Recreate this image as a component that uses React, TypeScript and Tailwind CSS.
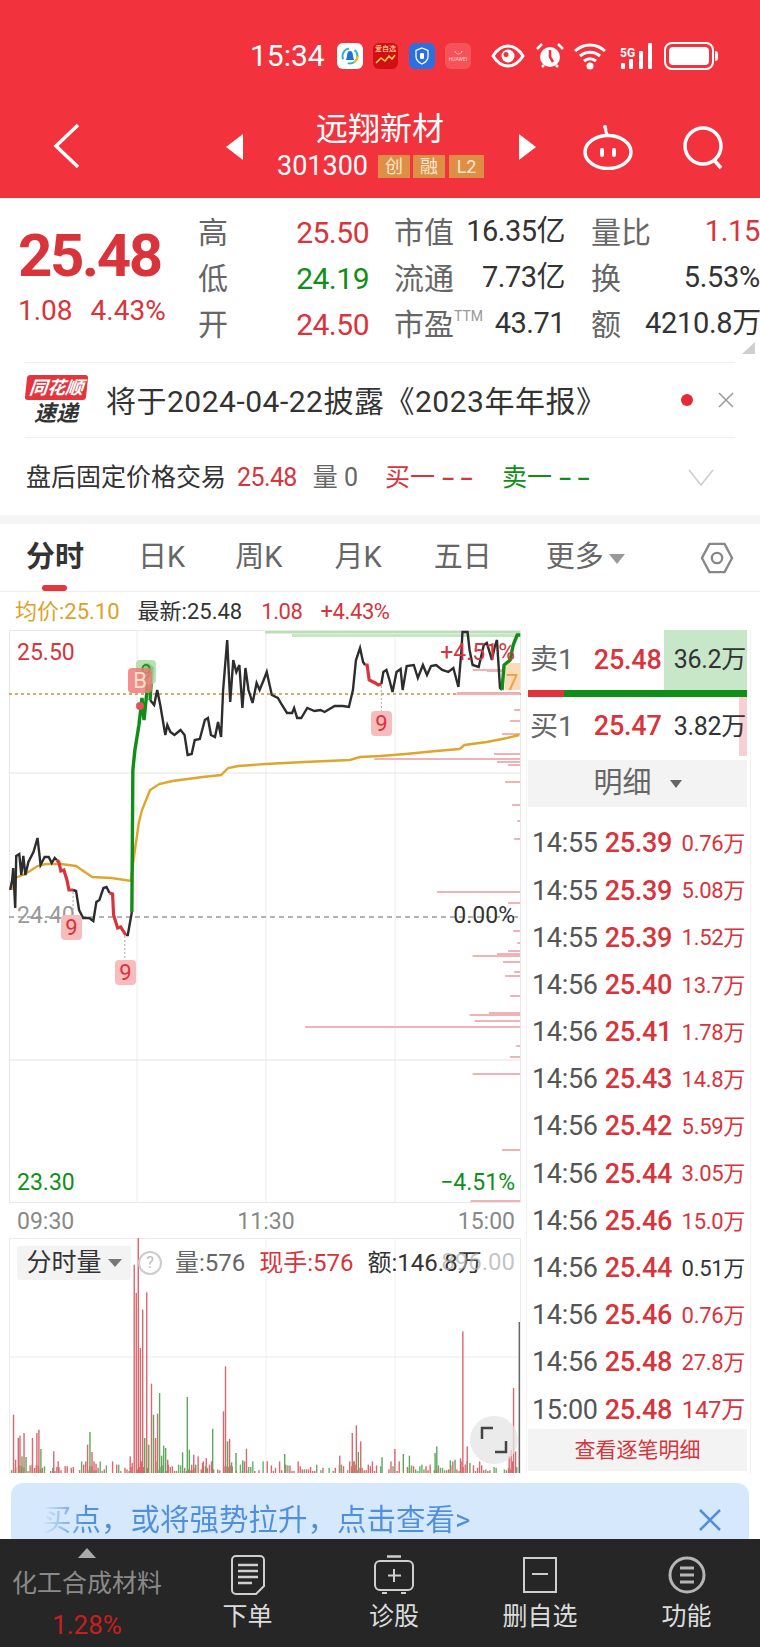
import type { ReactNode } from "react";

const RED = "text-[#d9333b]";
const GREEN = "text-[#0f8f17]";

// 图上坐标按放大图读的，x 要乘一下
const sx = (n: number) => n * 1.0142;
const pts = (list: number[][]) => list.map(([x, y]) => `${sx(x)},${y}`).join(" ");

const black1 = [[10,890],[12,880],[13,868],[15,908],[16,856],[19,854],[21,875],[23,856],[25,875],[28,862],[33,852],[37,838],[40,865],[44,857],[48,857],[51,863],[54,858],[56,860]];
const red1 = [[56,860],[58,862],[60,871],[63,870],[66,880],[68,890],[72,890]];
const black2 = [[72,890],[75,891],[78,910],[82,918],[88,918],[92,921],[95,902],[98,900],[102,888],[105,887],[108,893]];
const red2 = [[108,893],[111,894],[112,915],[116,928],[119,927],[124,935]];
const black3 = [[124,935],[126,935],[130,912]];
const green1 = [[130,912],[131,770],[133,750],[137,725],[140,698],[142,720],[145,690],[144,665],[146,665],[150,668],[148,700]];
const black4 = [[148,700],[152,705],[155,690],[158,705],[163,735],[165,725],[168,732],[172,735],[178,730],[182,735],[185,755],[189,754],[192,740],[197,739],[202,720],[205,718],[208,735],[212,737],[215,722],[218,737],[220,690],[224,640],[227,702],[230,660],[233,672],[236,665],[239,708],[242,668],[245,690],[249,703],[253,683],[256,690],[260,680],[263,672],[268,695],[274,698],[278,705],[283,713],[288,713],[290,708],[293,718],[297,718],[303,708],[310,711],[316,710],[320,712],[330,706],[338,706],[344,707],[348,690],[351,660],[355,648],[358,662],[360,665]];
const red3 = [[360,665],[362,665],[364,680],[370,683],[373,685],[376,684]];
const black5 = [[376,684],[378,672],[381,670],[384,680],[387,692],[391,672],[395,669],[397,690],[401,666],[408,665],[412,678],[417,665],[421,675],[425,666],[430,665],[436,670],[442,672],[447,668],[452,687],[455,650],[456,632],[461,632],[463,650],[466,665],[472,667],[477,645],[480,643],[485,660],[488,646],[490,640],[493,688],[495,690]];
const green2 = [[495,690],[497,665],[503,660],[506,645],[510,635],[513,635]];
const avg = [[12,890],[15,878],[25,874],[37,866],[45,864],[60,864],[75,866],[85,873],[91,877],[110,878],[129,881],[133,850],[137,822],[140,810],[148,790],[157,784],[170,781],[185,779],[200,777],[218,775],[225,768],[235,766],[262,764],[300,762],[345,760],[355,757],[375,756],[400,754],[430,751],[453,749],[458,745],[480,742],[500,738],[512,735]];

const depth = [[693,450],[669,466],[670,480],[709,507],[720,503],[733,495],[753,487],[758,369],[761,490],[764,501],[781,498],[804,505],[820,510],[838,507],[891,431],[902,501],[930,506],[942,510],[950,501],[953,490],[955,466],[961,496],[971,507],[975,498],[995,503],[1012,482],[1014,463],[1020,468],[1026,301],[1045,509],[1056,503],[1073,466],[1149,495],[1200,464]];

const bigBars: [number, number, string][] = [[38,585,"r"],[44,720,"r"],[52,655,"r"],[57,648,"r"],[63,710,"g"],[69,640,"r"],[75,712,"g"],[94,655,"r"],[100,745,"r"],[107,640,"r"],[113,630,"r"],[119,688,"g"],[157,695,"r"],[170,725,"r"],[257,675,"r"],[264,637,"g"],[270,697,"r"],[276,725,"r"],[282,732,"r"],[383,710,"r"],[389,730,"r"],[395,135,"r"],[401,220,"r"],[407,50,"r"],[413,385,"r"],[420,270,"r"],[426,655,"g"],[432,218,"r"],[438,675,"g"],[446,492,"r"],[452,585,"g"],[458,655,"r"],[464,582,"r"],[470,520,"g"],[476,708,"g"],[482,678,"g"],[488,685,"g"],[494,720,"r"],[538,698,"g"],[552,532,"g"],[558,690,"g"],[565,735,"r"],[571,705,"r"],[577,735,"g"],[584,710,"r"],[597,730,"r"],[608,715,"r"],[627,627,"g"],[659,575,"r"],[665,440,"r"],[671,665,"g"],[677,658,"r"],[683,728,"g"],[696,700,"g"],[716,722,"g"],[727,687,"r"],[840,703,"g"],[1003,708,"r"],[1040,640,"r"],[1046,725,"r"],[1052,617,"r"],[1058,697,"g"],[1065,665,"r"],[1128,713,"g"],[1166,688,"r"],[1191,703,"g"],[1209,708,"g"],[1285,700,"g"],[1290,680,"g"],[1330,722,"g"],[1344,720,"g"],[1360,716,"r"],[1367,335,"r"],[1380,680,"r"],[1388,730,"g"],[1504,708,"r"],[1510,690,"r"],[1517,505,"r"],[1523,695,"r"]];

function volumeBars() {
  const out: { x: number; h: number; c: string }[] = [];
  let seed = 17;
  for (let x = 32; x < 1530; x += 6.1) {
    seed = (seed * 137 + 59) % 1009;
    const h = 2 + (seed % 9) * (seed % 3 === 0 ? 1.6 : 0.8);
    if (seed % 4 === 0) continue;
    out.push({ x: x / 2.958, h, c: seed % 2 ? "#d9686e" : "#66b066" });
  }
  bigBars.forEach(([x, y, c]) => out.push({ x: x / 2.958, h: (760 - y) / 3, c: c === "r" ? "#d9686e" : "#5ba85b" }));
  return out;
}

function PriceChart() {
  return (
    <svg width="526" height="573" viewBox="0 630 526 573" className="block">
      <rect x="9.5" y="630.5" width="511" height="572" fill="none" stroke="#e8e8e8" />
      {[137, 266, 395].map((x) => <line key={x} x1={x} x2={x} y1="630" y2="1203" stroke="#ececec" />)}
      {[773, 1060].map((y) => <line key={y} x1="9" x2="521" y1={y} y2={y} stroke="#e4e4e4" />)}
      <line x1="9" x2="521" y1="917" y2="917" stroke="#9a9a9a" strokeWidth="1.5" strokeDasharray="5 4" />
      <line x1="9" x2="521" y1="694" y2="694" stroke="#d98a2b" strokeWidth="1.5" strokeDasharray="3 3" />
      <line x1="457" x2="520" y1="693" y2="693" stroke="#ea8b90" strokeWidth="1.5" />
      <rect x="265" y="631" width="255" height="2.5" fill="#b9e0b4" />
      <rect x="292" y="634" width="228" height="3" fill="#c5e6c1" />
      {depth.map(([y, x]) => <rect key={y} x={sx(x)} y={y} width={520 - sx(x)} height="2" fill="#efb2b6" />)}
      <rect x="505" y="663" width="15" height="27" fill="#fbdcb8" />
      <line x1={sx(72)} x2={sx(72)} y1="892" y2="915" stroke="#aaa" strokeDasharray="2 2" />
      <line x1={sx(123)} x2={sx(123)} y1="936" y2="960" stroke="#aaa" strokeDasharray="2 2" />
      <line x1={sx(376)} x2={sx(376)} y1="686" y2="712" stroke="#aaa" strokeDasharray="2 2" />
      <polyline points={pts(avg)} fill="none" stroke="#dfa52d" strokeWidth="2.4" />
      {[black1, black2, black3, black4, black5].map((l, i) => <polyline key={i} points={pts(l)} fill="none" stroke="#2d2d2d" strokeWidth="2.4" />)}
      {[red1, red2, red3].map((l, i) => <polyline key={i} points={pts(l)} fill="none" stroke="#d9333b" strokeWidth="3.2" />)}
      {[green1, green2].map((l, i) => <polyline key={i} points={pts(l)} fill="none" stroke="#0f8f17" strokeWidth="3.4" />)}
    </svg>
  );
}

function VolumeChart() {
  return (
    <svg width="526" height="236" viewBox="0 1238 526 236" className="block">
      <rect x="9.5" y="1238.5" width="511" height="240" fill="none" stroke="#ececec" />
      {[137, 266, 395].map((x) => <line key={x} x1={x} x2={x} y1="1238" y2="1474" stroke="#f0f0f0" />)}
      <line x1="9" x2="521" y1="1357" y2="1357" stroke="#eaeaea" />
      {volumeBars().map((b, i) => <rect key={i} x={b.x} y={1473 - b.h} width="1.4" height={b.h} fill={b.c} />)}
      <rect x="518.6" y="1322" width="1.4" height="151" fill="#666" />
    </svg>
  );
}

function Marker({ children, className }: { children: ReactNode; className: string }) {
  return (
    <span className={`absolute flex items-center justify-center rounded-[4px] ${className}`}>{children}</span>
  );
}

const nine = "h-[25px] w-[21px] bg-[#f7bcbc] text-[22px] text-[#d9333b]";

function StatusBar() {
  return (
    <div className="flex h-[110px] items-center pl-[250px] pt-[2px] text-white">
      <span className="w-[87px] text-[30px] leading-none">15:34</span>
      <div className="flex h-[26px] w-[26px] items-center justify-center rounded-[6px] bg-white">
        <svg width="20" height="20" viewBox="0 0 20 20" fill="none">
          <circle cx="10" cy="10" r="7.5" stroke="#2bb5c9" strokeWidth="2" strokeDasharray="14 6" />
          <circle cx="10" cy="10" r="7.5" stroke="#e8c12c" strokeWidth="2" strokeDasharray="8 40" />
          <path d="M10 5c2 0 3 2 3 5l1 4H6l1-4c0-3 1-5 3-5z" fill="#2272d6" />
        </svg>
      </div>
      <div className="ml-[10px] flex h-[26px] w-[25px] flex-col items-center rounded-[6px] bg-[#d40f14]">
        <span className="mt-[3px] text-[7px] leading-none text-[#ffe9b0]">爱自选</span>
        <svg width="21" height="12" viewBox="0 0 21 12" fill="none"><path d="M1 10l5-5 4 3 4-5 3 3 3-4" stroke="#ffd24a" strokeWidth="1.5" /></svg>
      </div>
      <div className="ml-[11px] flex h-[26px] w-[26px] items-center justify-center rounded-[6px] bg-[#2b6fe0]">
        <svg width="16" height="18" viewBox="0 0 16 18" fill="none"><path d="M8 1l6 2.5v6c0 3.5-3 6-6 7.500-3-1.500-6-4-6-7.500v-6z" stroke="#fff" strokeWidth="1.300" /><rect x="6" y="6" width="4" height="6" rx="1" fill="#fff" /></svg>
      </div>
      <div className="ml-[10px] flex h-[26px] w-[26px] flex-col items-center justify-center rounded-[6px] bg-[#f6525a]">
        <svg width="9" height="5" viewBox="0 0 9 5" fill="none"><path d="M1 1c1 4 6 4 7 0" stroke="#ffc9cc" /></svg>
        <span className="mt-[2px] text-[5px] leading-none text-[#ffd4d6]">HUAWEI</span>
      </div>
      <svg className="ml-[20px]" width="34" height="26" viewBox="0 0 34 26" fill="none">
        <path d="M2 13C7 5 12 3 17 3s10 2 15 10c-5 8-10 10-15 10S7 21 2 13z" stroke="#fff" strokeWidth="3" />
        <circle cx="17" cy="13" r="6.500" fill="#fff" /><circle cx="15" cy="11.500" r="2.500" fill="#f2323c" />
      </svg>
      <svg className="ml-[10px]" width="30" height="30" viewBox="0 0 30 30" fill="none">
        <circle cx="15" cy="16" r="10" fill="#fff" />
        <path d="M15 9v7l3 5" stroke="#f2323c" strokeWidth="2.500" />
        <path d="M2 8l5-5M28 8l-5-5M7 26l2-2M23 26l-2-2" stroke="#fff" strokeWidth="2.500" />
      </svg>
      <svg className="ml-[8px]" width="34" height="28" viewBox="0 0 34 28" fill="none">
        <path d="M2 9c9-8 21-8 30 0M7 14c6-5 14-5 20 0M11 19c4-3 8-3 12 0" stroke="#fff" strokeWidth="3" />
        <circle cx="17" cy="24" r="3.500" fill="#fff" />
      </svg>
      <div className="ml-[13px] flex items-end gap-[4px]">
        <div className="flex flex-col">
          <span className="text-[12px] font-bold leading-[12px]">5G</span>
          <div className="flex items-end gap-[4px] pl-[1px]">
            <span className="h-[6px] w-[4px] rounded-[1px] bg-white" /><span className="h-[10px] w-[4px] rounded-[1px] bg-white" />
          </div>
        </div>
        <span className="h-[18px] w-[4px] rounded-[1px] bg-white" /><span className="ml-[1px] h-[26px] w-[4px] rounded-[1px] bg-white" />
      </div>
      <div className="ml-[12px] flex items-center">
        <div className="h-[28px] w-[50px] rounded-[8px] border-2 border-white p-[3px]">
          <div className="h-full w-full rounded-[4px] bg-white" />
        </div>
        <span className="ml-[1px] h-[10px] w-[3px] rounded-r bg-white" />
      </div>
    </div>
  );
}

function NavBar() {
  return (
    <div className="relative flex h-[88px] items-start text-white">
      <svg className="ml-[52px] mt-[13px]" width="30" height="46" viewBox="0 0 30 46" fill="none">
        <path d="M26 2L4 23l22 21" stroke="#fff" strokeWidth="3.500" />
      </svg>
      <div className="ml-[144px] mt-[24px] h-0 w-0 border-y-[13px] border-r-[17px] border-y-transparent border-r-white" />
      <div className="ml-[34px] flex w-[240px] flex-col items-center pr-[34px]">
        <span className="mt-[1px] text-[32px] leading-[36px]">远翔新材</span>
        <div className="mt-[8px] flex h-[23px] items-center self-start">
          <span className="text-[27px] leading-none">301300</span>
          <span className="ml-[10px] flex h-[23px] w-[32px] items-center justify-center bg-[#de8f45] text-[18px] leading-none text-[#fbe6d2]">创</span>
          <span className="ml-[3px] flex h-[23px] w-[32px] items-center justify-center bg-[#de8f45] text-[18px] leading-none text-[#fbe6d2]">融</span>
          <span className="ml-[4px] flex h-[23px] w-[35px] items-center justify-center bg-[#de8f45] text-[18px] leading-none text-[#fbe6d2]">L2</span>
        </div>
      </div>
      <div className="ml-[2px] mt-[24px] h-0 w-0 border-y-[13px] border-l-[17px] border-y-transparent border-l-white" />
      <svg className="ml-[47px] mt-[14px]" width="50" height="46" viewBox="0 0 50 46" fill="none">
        <path d="M25 12c-2-3-3-5-2-8" stroke="#fff" strokeWidth="3" /><circle cx="22" cy="3" r="2" fill="#fff" />
        <ellipse cx="25" cy="28" rx="23" ry="16.500" stroke="#fff" strokeWidth="3.500" />
        <rect x="17" y="24" width="4" height="9" rx="2" fill="#fff" /><rect x="29" y="24" width="4" height="9" rx="2" fill="#fff" />
      </svg>
      <svg className="ml-[49px] mt-[16px]" width="44" height="44" viewBox="0 0 44 44" fill="none">
        <circle cx="21" cy="20" r="18" stroke="#fff" strokeWidth="3.500" />
        <path d="M32 34l7 8" stroke="#fff" strokeWidth="3.500" />
      </svg>
    </div>
  );
}

function QuoteRow({ a, b, bc, c, d, e, f, fc = "text-[#333]", ttm }: { a: string; b: string; bc: string; c: string; d: string; e: string; f: string; fc?: string; ttm?: boolean }) {
  return (
    <div className="flex h-[46px] items-center">
      <span className="w-[30px] text-[30px] text-[#666]">{a}</span>
      <span className={`w-[141px] text-right text-[30px] tracking-[-0.5px] ${bc}`}>{b}</span>
      <span className="ml-[25px] flex w-[62px] whitespace-nowrap text-[30px] text-[#666]">
        {c}
        {ttm ? <sup className="mt-[14px] text-[14px] leading-none text-[#999]">TTM</sup> : null}
      </span>
      <span className="w-[109px] text-right text-[29px] tracking-[-0.5px] text-[#333]">{d}</span>
      <span className="ml-[26px] w-[54px] whitespace-nowrap text-[30px] text-[#666]">{e}</span>
      <span className={`w-[115px] whitespace-nowrap text-right text-[29px] tracking-[-0.3px] ${fc}`}>{f}</span>
    </div>
  );
}

function Quote() {
  return (
    <div className="relative flex h-[164px] pt-[11px]">
      <div className="w-[198px] pl-[18px] pt-[16px]">
        <div className={`text-[60px] font-bold leading-[62px] tracking-[-2.5px] ${RED}`}>25.48</div>
        <div className={`mt-[8px] flex gap-[18px] whitespace-nowrap text-[28px] leading-[32px] ${RED}`}>
          <span>1.08</span><span>4.43%</span>
        </div>
      </div>
      <div className="min-w-0 flex-1">
        <QuoteRow a="高" b="25.50" bc={RED} c="市值" d="16.35亿" e="量比" f="1.15" fc={RED} />
        <QuoteRow a="低" b="24.19" bc={GREEN} c="流通" d="7.73亿" e="换" f="5.53%" />
        <QuoteRow a="开" b="24.50" bc={RED} c="市盈" d="43.71" e="额" f="4210.8万" ttm />
      </div>
      <div className="absolute right-[5px] top-[144px] h-0 w-0 border-b-[12px] border-l-[13px] border-b-[#cfcfcf] border-l-transparent" />
    </div>
  );
}

function Notice() {
  return (
    <div className="mx-[25px] flex h-[76px] items-center border-y border-[#f0f0f0]">
      <div className="flex w-[62px] flex-col items-center">
        <span className="w-[61px] -skew-x-6 rounded-[3px] bg-[#e4353c] text-center text-[18px] font-bold italic leading-[25px] text-white">同花顺</span>
        <span className="mt-[1px] text-[22px] font-bold italic leading-[25px] text-[#333]">速递</span>
      </div>
      <span className="ml-[19px] mt-[3px] whitespace-nowrap text-[30px] tracking-[0.5px] text-[#333]">将于2024-04-22披露《2023年年报》</span>
      <span className="ml-auto mr-[25px] h-[12px] w-[12px] rounded-full bg-[#e52a33]" />
      <svg className="mr-[1px]" width="16" height="16" viewBox="0 0 16 16" fill="none"><path d="M1 1l14 14M15 1L1 15" stroke="#999" strokeWidth="1.500" /></svg>
    </div>
  );
}

function AfterHours() {
  return (
    <div className="flex h-[77px] items-center pl-[26px] pt-[3px] text-[25px]">
      <span className="text-[#333]">盘后固定价格交易</span>
      <span className={`ml-[11px] tracking-[-0.6px] ${RED}`}>25.48</span>
      <span className="ml-[16px] text-[#666]">量 0</span>
      <span className={`ml-[27px] whitespace-nowrap ${RED}`}>买一 <span className="text-[21px] font-bold">– –</span></span>
      <span className={`ml-[29px] whitespace-nowrap ${GREEN}`}>卖一 <span className="text-[21px] font-bold">– –</span></span>
      <svg className="absolute left-[688px]" width="26" height="18" viewBox="0 0 26 18" fill="none"><path d="M1 1l12 15L25 1" stroke="#ccc" strokeWidth="1.500" /></svg>
    </div>
  );
}

function Tabs() {
  return (
    <div className="relative flex h-[68px] items-center border-b border-[#eee] text-[29px] text-[#666]">
      <span className="ml-[26px] font-bold text-[#333]">分时</span>
      <span className="ml-[54px]">日K</span>
      <span className="ml-[50px]">周K</span>
      <span className="ml-[52px]">月K</span>
      <span className="ml-[52px]">五日</span>
      <span className="ml-[54px]">更多</span>
      <span className="ml-[5px] mt-[3px] h-0 w-0 border-x-[8px] border-t-[10px] border-x-transparent border-t-[#999]" />
      <svg className="ml-[75px]" width="34" height="32" viewBox="0 0 36 34" fill="none">
        <path d="M10 2h16l8 15-8 15H10L2 17z" stroke="#888" strokeWidth="2.500" strokeLinejoin="round" />
        <circle cx="18" cy="17" r="5.500" stroke="#888" strokeWidth="2.500" />
      </svg>
      <span className="absolute bottom-0 left-[42px] h-[6px] w-[25px] rounded-full bg-[#e4353c]" />
    </div>
  );
}

function InfoLine() {
  return (
    <div className="flex h-[38px] items-center pl-[15px] text-[22px]">
      <span className="text-[#d9a32a]">均价:25.10</span>
      <span className="ml-[18px] text-[#333]">最新:25.48</span>
      <span className={`ml-[19px] tracking-[-0.4px] ${RED}`}>1.08</span>
      <span className={`ml-[18px] tracking-[-0.4px] ${RED}`}>+4.43%</span>
    </div>
  );
}

function LeftCharts() {
  return (
    <div className="w-[526px] shrink-0">
      <div className="relative h-[573px] text-[23px]">
        <PriceChart />
        <span className={`absolute left-[17px] top-[6px] ${RED}`}>25.50</span>
        <span className={`absolute right-[11px] top-[6px] ${RED}`}>+4.51%</span>
        <span className="absolute left-[17px] top-[269px] text-[#999]">24.40</span>
        <span className="absolute right-[11px] top-[269px] text-[#333]">0.00%</span>
        <span className={`absolute bottom-[3px] left-[17px] ${GREEN}`}>23.30</span>
        <span className={`absolute bottom-[3px] right-[11px] ${GREEN}`}>−4.51%</span>
        <Marker className="left-[136px] top-[30px] h-[24px] w-[20px] bg-[#a8d8a0]/80 text-[20px] text-[#0f8f17]">9</Marker>
        <Marker className="left-[128px] top-[38px] h-[25px] w-[24px] bg-[#ef7b7b]/85 text-[22px] text-[#f6e0c8]">B</Marker>
        <span className="absolute left-[136px] top-[72px] h-[8px] w-[8px] rounded-full bg-[#e0555c]" />
        <Marker className={`left-[61px] top-[285px] ${nine}`}>9</Marker>
        <Marker className={`left-[115px] top-[330px] ${nine}`}>9</Marker>
        <Marker className={`left-[371px] top-[81px] ${nine}`}>9</Marker>
        <span className="absolute left-[506px] top-[36px] text-[22px] text-[#f0a040]">7</span>
      </div>
      <div className="flex h-[35px] items-center justify-between pl-[17px] pr-[11px] pt-[3px] text-[23px] text-[#888]">
        <span>09:30</span><span>11:30</span><span>15:00</span>
      </div>
      <div className="relative h-[236px]">
        <VolumeChart />
        <div className="absolute left-[0px] top-[8px] flex h-[34px] w-full items-center text-[24px]">
          <span className="ml-[17px] flex h-[34px] w-[114px] items-center justify-center gap-[6px] rounded-[3px] bg-[#f3f3f3] text-[25px] text-[#333]">
            分时量<span className="h-0 w-0 border-x-[7px] border-t-[8px] border-x-transparent border-t-[#777]" />
          </span>
          <span className="ml-[7px] flex h-[24px] w-[24px] items-center justify-center rounded-full border-2 border-[#ccc] text-[16px] leading-none text-[#bbb]">?</span>
          <span className="ml-[13px] text-[#666]">量:576</span>
          <span className={`ml-[14px] ${RED}`}>现手:576</span>
          <span className="ml-[14px] text-[#333]">额:146.8万</span>
        </div>
        <span className="absolute right-[11px] top-[6px] text-[24px] text-[#aaa]/70">896.00</span>
        <div className="absolute left-[470px] top-[178px] flex h-[48px] w-[48px] items-center justify-center rounded-full bg-[#e4e4e4]/75">
          <svg width="28" height="28" viewBox="0 0 28 28" fill="none">
            <path d="M2 13V2h11M26 15v11H15" stroke="#444" strokeWidth="2.500" />
          </svg>
        </div>
      </div>
    </div>
  );
}

const trades: [string, string, string, string?][] = [
  ["14:55", "25.39", "0.76万"],
  ["14:55", "25.39", "5.08万"],
  ["14:55", "25.39", "1.52万"],
  ["14:56", "25.40", "13.7万"],
  ["14:56", "25.41", "1.78万"],
  ["14:56", "25.43", "14.8万"],
  ["14:56", "25.42", "5.59万"],
  ["14:56", "25.44", "3.05万"],
  ["14:56", "25.46", "15.0万"],
  ["14:56", "25.44", "0.51万", "text-[#333]"],
  ["14:56", "25.46", "0.76万"],
  ["14:56", "25.48", "27.8万"],
  ["15:00", "25.48", "147万"],
];

function RightPanel() {
  return (
    <div className="mr-[9px] flex w-[225px] flex-col border-x border-[#f2f2f2] pl-[1px] pr-[3px]">
      <div className="relative flex h-[60px] items-center pl-[2px] text-[28px]">
        <span className="text-[#666]">卖1</span>
        <span className={`ml-[20px] text-[27px] font-medium tracking-[-0.2px] ${RED}`}>25.48</span>
        <span className="absolute bottom-0 right-0 top-0 flex w-[83px] items-center justify-end bg-[#c8e6c8] pr-[1px] text-[25px] tracking-[-0.3px] text-[#333]">36.2万</span>
      </div>
      <div className="flex h-[7px]">
        <span className="w-[36px] bg-[#e0343c]" /><span className="flex-1 bg-[#0f8f17]" />
      </div>
      <div className="relative flex h-[59px] items-center pl-[2px] text-[28px]">
        <span className="text-[#666]">买1</span>
        <span className={`ml-[20px] text-[27px] font-medium tracking-[-0.2px] ${RED}`}>25.47</span>
        <span className="absolute bottom-0 right-0 top-0 w-[8px] bg-[#f8d0d4]" />
        <span className="absolute right-[1px] text-[25px] tracking-[-0.3px] text-[#333]">3.82万</span>
      </div>
      <div className="mt-[4px] flex h-[47px] items-center justify-center gap-[18px] bg-[#f3f3f3] text-[29px] text-[#666]">
        明细<span className="h-0 w-0 border-x-[6px] border-t-[8px] border-x-transparent border-t-[#666]" />
      </div>
      <div className="mt-[13px] flex flex-col">
        {trades.map(([t, p, v, c], i) => (
          <div key={i} className="flex h-[47.200px] items-center pl-[4px] pr-[2px]">
            <span className="text-[27px] tracking-[-0.3px] text-[#555]">{t}</span>
            <span className={`ml-[7px] text-[27px] font-medium tracking-[-0.3px] ${RED}`}>{p}</span>
            <span className={`ml-auto whitespace-nowrap tracking-[-0.3px] ${i === 12 ? "text-[24px]" : "text-[22px]"} ${c ?? RED}`}>{v}</span>
          </div>
        ))}
      </div>
      <div className={`-mt-[4px] flex h-[42px] items-center justify-center bg-[#f3f3f3] text-[21px] ${RED}`}>查看逐笔明细</div>
    </div>
  );
}

function Banner() {
  return (
    <div className="mx-[11px] mt-[9px] flex h-[56px] items-center rounded-t-[12px] bg-[#d6e8fb] pl-[31px] pr-[27px] pt-[18px]">
      <span className="bg-gradient-to-r from-[#d6e8fb] from-0% via-[#4f8fdc] via-[10%] to-[#4f8fdc] bg-clip-text text-[29.500px] text-transparent">买点，或将强势拉升，点击查看&gt;</span>
      <svg className="ml-auto" width="24" height="24" viewBox="0 0 24 24" fill="none"><path d="M2 2l20 20M22 2L2 22" stroke="#4f8fdc" strokeWidth="2.500" /></svg>
    </div>
  );
}

function BottomItem({ icon, label }: { icon: ReactNode; label: string }) {
  return (
    <div className="flex flex-col items-center pt-[15px]">
      <div className="flex h-[42px] items-center">{icon}</div>
      <span className="mt-[3px] text-[25px] leading-[36px] text-[#dcdcdc]">{label}</span>
    </div>
  );
}

function BottomBar() {
  return (
    <div className="grid h-[108px] grid-cols-[174px_147px_146px_146px_147px] bg-[#262626]">
      <div className="flex flex-col items-center pt-[9px]">
        <span className="h-0 w-0 border-x-[9px] border-b-[10px] border-x-transparent border-b-[#aaa]" />
        <span className="mt-[8px] text-[25px] leading-[36px] text-[#8a8a8a]">化工合成材料</span>
        <span className="mt-[7px] text-[26px] leading-[32px] text-[#c81e1e]">1.28%</span>
      </div>
      <BottomItem
        label="下单"
        icon={
          <svg width="34" height="40" viewBox="0 0 34 40" fill="none" stroke="#cfcfcf" strokeWidth="2">
            <path d="M5 1h24a4 4 0 014 4v26l-8 8H5a4 4 0 01-4-4V5a4 4 0 014-4z" />
            <path d="M7 10h20M7 16h20M7 22h20M7 28h14" strokeWidth="2.500" />
          </svg>
        }
      />
      <BottomItem
        label="诊股"
        icon={
          <svg width="42" height="40" viewBox="0 0 42 40" fill="none" stroke="#cfcfcf" strokeWidth="2">
            <path d="M14 1.500h14" strokeWidth="2.500" />
            <rect x="2" y="6" width="38" height="29" rx="5" />
            <path d="M21 14v13M15 20.500h13M9 38h5M28 38h5" />
          </svg>
        }
      />
      <BottomItem
        label="删自选"
        icon={
          <svg width="36" height="38" viewBox="0 0 36 38" fill="none" stroke="#cfcfcf" strokeWidth="2">
            <rect x="2" y="2" width="32" height="34" />
            <path d="M10 18h16" />
          </svg>
        }
      />
      <BottomItem
        label="功能"
        icon={
          <svg width="38" height="38" viewBox="0 0 38 38" fill="none" stroke="#b5b5b5" strokeWidth="3">
            <circle cx="19" cy="19" r="17" />
            <path d="M12 12h14M12 19h14M12 26h14" />
          </svg>
        }
      />
    </div>
  );
}

export default function App() {
  return (
    <div className="relative h-[1647px] w-[760px] overflow-hidden bg-white font-['Roboto','Noto_Sans_CJK_SC',sans-serif]">
      <div className="h-[198px] bg-[#f2323c]">
        <StatusBar />
        <NavBar />
      </div>
      <Quote />
      <Notice />
      <AfterHours />
      <div className="h-[9px] bg-[#f5f5f5]" />
      <Tabs />
      <InfoLine />
      <div className="flex justify-between">
        <LeftCharts />
        <RightPanel />
      </div>
      <Banner />
      <BottomBar />
    </div>
  );
}
